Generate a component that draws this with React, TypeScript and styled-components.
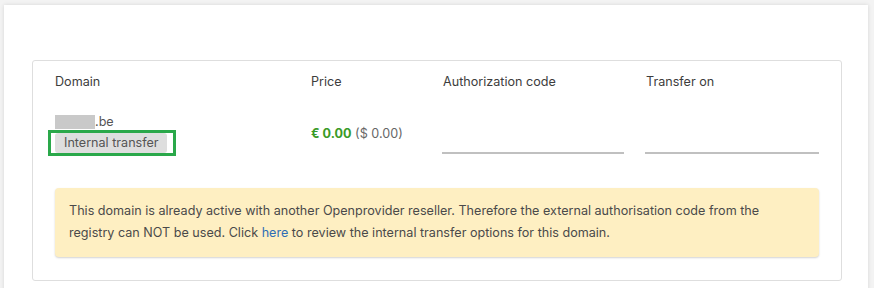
import React from "react";
import styled, { createGlobalStyle } from "styled-components";

const Global = createGlobalStyle`
  html, body { margin: 0; padding: 0; background: #f3f3f3; }
  body { font-family: Inter, "Noto Sans", Arial, sans-serif; font-size: 12.6px; color: #444; }
  * { box-sizing: border-box; }
`;

const Page = styled.div`
  padding: 5px 6px 0 4px;
  height: 288px;
  overflow: hidden;
`;

const Card = styled.div`
  background: #fff;
  width: 864px;
  min-height: 300px;
  padding: 55px 26px 20px 28px;
  box-shadow: 0 0 4px rgba(0, 0, 0, 0.12);
`;

const Panel = styled.div`
  border: 1px solid #dedede;
  border-radius: 3px;
  padding: 13px 22px 23px 22px;
`;

const Grid = styled.div`
  display: grid;
  grid-template-columns: 256px 132px 203px 1fr;
  align-items: start;
`;

const HeadCell = styled.div`
  color: #3d3d3d;
  line-height: 16px;
  height: 16px;
`;

const BodyCell = styled.div`
  height: 79px;
`;

const DomainName = styled.div`
  display: flex;
  align-items: center;
  height: 16px;
  margin-top: 24px;
  color: #555;
  line-height: 16px;
`;

const Blur = styled.span`
  display: inline-block;
  width: 40px;
  height: 14px;
  background: #c9c9c9;
`;

const TagFrame = styled.span`
  display: inline-block;
  margin: 0 0 0 -7px;
  border: 3px solid #2aa84a;
  padding: 0 6px 0 4px;
`;

const Tag = styled.span`
  display: block;
  background: #dedede;
  border-radius: 3px;
  padding: 0 8px 0 9px;
  height: 20px;
  line-height: 20px;
  color: #555;
`;

const Price = styled.div`
  margin-top: 36px;
  line-height: 16px;
  color: #666;
`;

const Euro = styled.span`
  color: #3a9b28;
  font-weight: 700;
`;

const Underline = styled.div<{ $w: number; $ml?: number }>`
  margin-top: 62px;
  margin-left: ${(p) => p.$ml ?? 0}px;
  width: ${(p) => p.$w}px;
  height: 2px;
  background: #c0c0c0;
`;

const Alert = styled.div`
  margin-top: 19px;
  background: #feefc2;
  border-radius: 4px;
  padding: 12px 14px 13px;
  line-height: 22px;
  color: #4a4a4a;
  box-shadow: 0 1px 2px rgba(0, 0, 0, 0.18);
`;

const Link = styled.a`
  color: #2f6db5;
  text-decoration: none;
`;

export default function App() {
  return (
    <>
      <Global />
      <Page>
        <Card>
          <Panel>
            <Grid>
              <HeadCell>Domain</HeadCell>
              <HeadCell>Price</HeadCell>
              <HeadCell>Authorization code</HeadCell>
              <HeadCell>Transfer on</HeadCell>
              <BodyCell>
                <DomainName>
                  <Blur />
                  .be
                </DomainName>
                <TagFrame>
                  <Tag>Internal transfer</Tag>
                </TagFrame>
              </BodyCell>
              <BodyCell>
                <Price>
                  <Euro>€ 0.00</Euro> ($ 0.00)
                </Price>
              </BodyCell>
              <BodyCell>
                <Underline $w={182} $ml={-1} />
              </BodyCell>
              <BodyCell>
                <Underline $w={174} $ml={-1} />
              </BodyCell>
            </Grid>
            <Alert>
              This domain is already active with another Openprovider reseller. Therefore the external
              authorisation code from the registry can NOT be used. Click <Link href="#">here</Link> to
              review the internal transfer options for this domain.
            </Alert>
          </Panel>
        </Card>
      </Page>
    </>
  );
}
